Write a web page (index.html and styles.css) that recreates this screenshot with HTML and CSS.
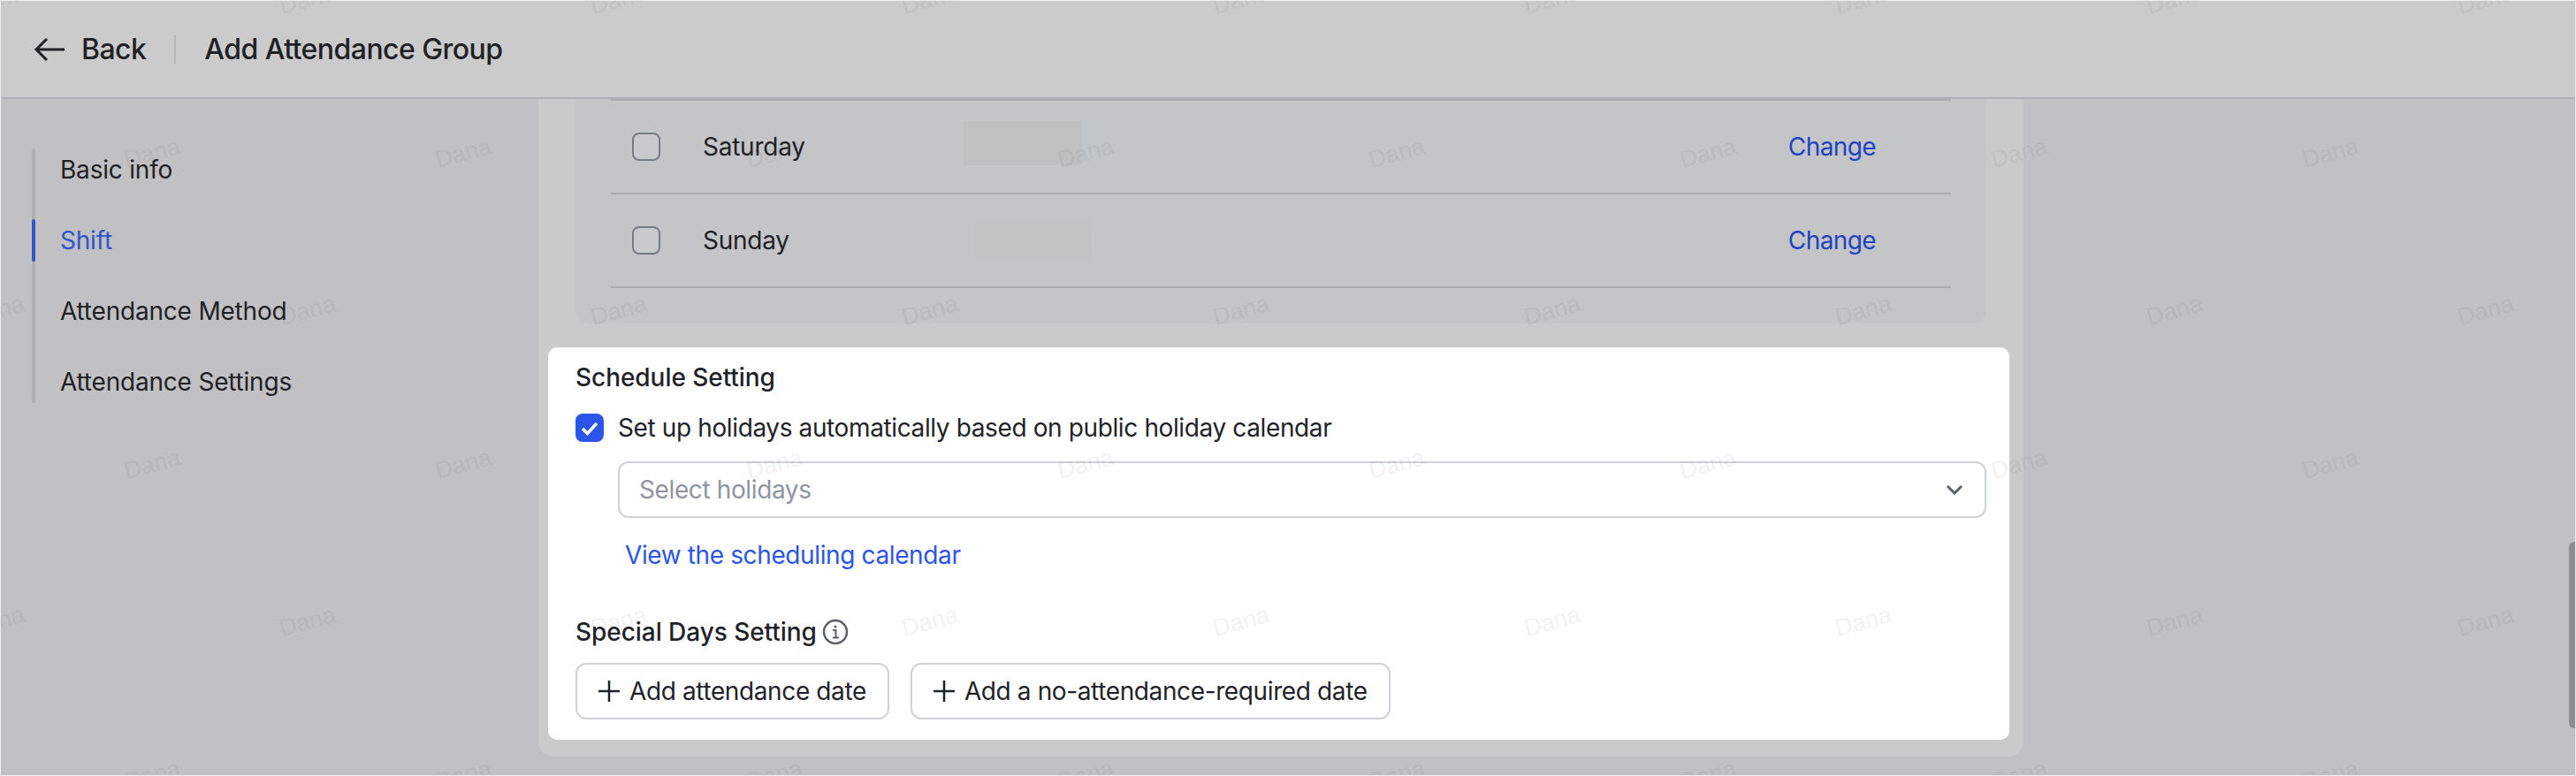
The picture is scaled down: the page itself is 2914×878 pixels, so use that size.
FILE: index.html
```html
<!DOCTYPE html>
<html lang="en">
<head>
  <meta charset="UTF-8">
  <title>Add Attendance Group</title>
  <link rel="stylesheet" href="styles.css">
</head>
<body>
  <div class="app">
    <header class="topbar">
      <svg class="back-icon" width="36" height="28" viewBox="0 0 36 28"><path d="M35 14H3M15 2L3 14l12 12" fill="none" stroke="#1f2124" stroke-width="3"/></svg>
      <span class="back-label">Back</span>
      <span class="topbar-divider"></span>
      <span class="page-title">Add Attendance Group</span>
    </header>

    <div class="main">
      <nav class="side-nav">
        <a class="nav-item">Basic info</a>
        <a class="nav-item active">Shift</a>
        <a class="nav-item">Attendance Method</a>
        <a class="nav-item">Attendance Settings</a>
      </nav>

      <section class="card">
        <div class="days-panel">
          <div class="day-list">
            <div class="day-row">
              <span class="day-check"></span>
              <span class="day-name">Saturday</span>
              <span class="blur-block saturday"></span>
              <a class="change-link">Change</a>
            </div>
            <div class="day-row">
              <span class="day-check"></span>
              <span class="day-name">Sunday</span>
              <span class="blur-block sunday"></span>
              <a class="change-link">Change</a>
            </div>
          </div>
        </div>

        <div class="settings">
          <h2 class="section-title">Schedule Setting</h2>
          <label class="check-row">
            <span class="check-on">
              <svg width="32" height="32" viewBox="0 0 32 32"><path d="M8 17l5.5 5.5L24 11" fill="none" stroke="#fff" stroke-width="3.5"/></svg>
            </span>
            Set up holidays automatically based on public holiday calendar
          </label>
          <div class="select-box">
            <span>Select holidays</span>
            <svg width="20" height="12" viewBox="0 0 20 12"><path d="M2 2l8 8 8-8" fill="none" stroke="#5c6068" stroke-width="3"/></svg>
          </div>
          <a class="calendar-link">View the scheduling calendar</a>

          <h2 class="section-title special-title">
            Special Days Setting
            <svg class="info-icon" width="30" height="30" viewBox="0 0 30 30">
              <circle cx="15" cy="15" r="13" fill="none" stroke="#5c6068" stroke-width="2.5"/>
              <path d="M12 13h3.5v8M12 21.500h7" fill="none" stroke="#5c6068" stroke-width="2"/>
              <circle cx="15" cy="9" r="1.600" fill="#5c6068"/>
            </svg>
          </h2>
          <div class="button-row">
            <button class="add-btn">
              <svg width="24" height="24" viewBox="0 0 24 24"><path d="M12 0v24M0 12h24" stroke="#1f2329" stroke-width="2.5"/></svg>
              Add attendance date
            </button>
            <button class="add-btn">
              <svg width="24" height="24" viewBox="0 0 24 24"><path d="M12 0v24M0 12h24" stroke="#1f2329" stroke-width="2.5"/></svg>
              Add a no-attendance-required date
            </button>
          </div>
        </div>
      </section>
    </div>

    <div class="scroll-thumb"></div>

    <!-- watermark lies over the whole page -->
    <svg class="watermark" width="100%" height="100%">
      <defs>
        <pattern id="wm" width="352" height="352" patternUnits="userSpaceOnUse">
          <text class="wm-text" x="172" y="182" text-anchor="middle" transform="rotate(-15 172 173)">Dana</text>
          <text class="wm-text" x="348" y="8" text-anchor="middle" transform="rotate(-15 348 0)">Dana</text>
          <text class="wm-text" x="-4" y="8" text-anchor="middle" transform="rotate(-15 -4 0)">Dana</text>
          <text class="wm-text" x="348" y="360" text-anchor="middle" transform="rotate(-15 348 352)">Dana</text>
          <text class="wm-text" x="-4" y="360" text-anchor="middle" transform="rotate(-15 -4 352)">Dana</text>
        </pattern>
      </defs>
      <rect width="100%" height="100%" fill="url(#wm)"/>
    </svg>
  </div>
</body>
</html>
```

FILE: styles.css
```css
html, body {
  margin: 0;
  height: 100%;
  overflow: hidden;
}
body {
  background: #eeeeee;
  font-family: Inter, "Noto Sans", sans-serif;
  font-size: 28px;
  letter-spacing: -0.38px;
  color: #1f2329;
}
.app {
  position: relative;
  box-sizing: border-box;
  height: 876px;
  margin: 1px 1px 0 1px;
  background: #c1c1c3;
  overflow: hidden;
  display: flex;
  flex-direction: column;
}

/* top bar */
.topbar {
  box-sizing: border-box;
  height: 111px;
  flex: none;
  display: flex;
  align-items: center;
  padding-left: 37px;
  background: #cbcbcb;
  border-bottom: 2px solid #b1b1b5;
  color: #1f2124;
  font-size: 32px;
  font-weight: 500;
  letter-spacing: -0.55px;
}
.back-label {
  margin-left: 18px;
}
.topbar-divider {
  width: 2px;
  height: 32px;
  margin: 0 32px;
  background: #b6b6b8;
}

/* left nav */
.main {
  flex: 1;
  display: flex;
  min-height: 0;
}
.side-nav {
  box-sizing: content-box;
  width: 573px;
  padding-left: 35px;
  padding-top: 56px;
  display: flex;
  flex-direction: column;
  gap: 32px;
  align-self: flex-start;
  position: relative;
  letter-spacing: -0.2px;
}
.side-nav::before {
  content: "";
  position: absolute;
  left: 35px;
  top: 56px;
  bottom: 0;
  width: 4px;
  border-radius: 2px;
  background: #b0b0b3;
}
.nav-item {
  position: relative;
  height: 48px;
  line-height: 48px;
  padding-left: 32px;
  color: #1f2124;
}
.nav-item.active {
  color: #2f55cc;
}
.nav-item.active::before {
  content: "";
  position: absolute;
  left: 0;
  top: 0;
  bottom: 0;
  width: 4px;
  border-radius: 2px;
  background: #2f55cc;
}

/* middle card */
.card {
  box-sizing: border-box;
  width: 1680px;
  height: 744px;
  padding: 0 42px 19px;
  background: #cacaca;
  border-radius: 0 0 16px 16px;
}
.days-panel {
  height: 254px;
  background: #c4c5c7;
  border-radius: 0 0 16px 16px;
  padding: 0 40px;
}
.day-list {
  border-top: 2px solid #abacb0;
}
.day-row {
  box-sizing: border-box;
  height: 106px;
  display: flex;
  align-items: center;
  border-bottom: 2px solid #abacb0;
}
.day-check {
  box-sizing: border-box;
  width: 32px;
  height: 32px;
  margin-left: 24px;
  border: 2px solid #777b83;
  border-radius: 8px;
  background: #c9cacc;
}
.day-name {
  width: 295px;
  margin-left: 48px;
  color: #1f2124;
  letter-spacing: -0.25px;
}
.blur-block {
  display: block;
  background: #bfc0bf;
}
.blur-block.saturday {
  width: 134px;
  height: 50px;
  margin-bottom: 8px;
}
.blur-block.sunday {
  width: 132px;
  height: 38px;
  margin-left: 13px;
  background: #c2c3c3;
}
.change-link {
  margin-left: auto;
  margin-right: 85px;
  color: #2142c4;
  letter-spacing: -0.6px;
}

/* white section */
.settings {
  margin: 27px -26px 0 -31px;
  padding: 14px 26px 23px 31px;
  background: #fff;
  border-radius: 10px;
}
.section-title {
  margin: 0;
  font-size: 28px;
  font-weight: 500;
  line-height: 40px;
  letter-spacing: -0.05px;
}
.check-row {
  display: flex;
  align-items: center;
  gap: 16px;
  height: 44px;
  margin-top: 15px;
}
.check-on {
  width: 32px;
  height: 32px;
  border-radius: 8px;
  background: #2a55e8;
  display: flex;
}
.select-box {
  box-sizing: border-box;
  height: 64px;
  margin: 16px 0 0 48px;
  padding: 0 24px 0 22px;
  width: 1548px;
  display: flex;
  align-items: center;
  justify-content: space-between;
  border: 2px solid #d0d3d6;
  border-radius: 12px;
  color: #8f959e;
}
.calendar-link {
  display: block;
  line-height: 40px;
  margin: 22px 0 0 56px;
  color: #2a55e8;
}
.special-title {
  margin-top: 47px;
  display: flex;
  align-items: center;
  gap: 6px;
}
.button-row {
  display: flex;
  gap: 24px;
  margin-top: 15px;
}
.add-btn {
  box-sizing: border-box;
  height: 64px;
  padding: 0 24px;
  display: flex;
  align-items: center;
  gap: 11px;
  background: #fff;
  border: 2px solid #d0d3d6;
  border-radius: 12px;
  font: inherit;
  letter-spacing: -0.38px;
  color: #1f2329;
}

.scroll-thumb {
  position: absolute;
  right: 0;
  top: 612px;
  width: 7px;
  height: 211px;
  border-radius: 6px 0 0 6px;
  background: #8c8e90;
}
.watermark {
  position: absolute;
  left: -1px;
  top: -1px;
  pointer-events: none;
}
.wm-text {
  font-family: "Liberation Sans", sans-serif;
  font-size: 27px;
  letter-spacing: 0;
  fill: rgba(0, 0, 0, 0.05);
}
```
